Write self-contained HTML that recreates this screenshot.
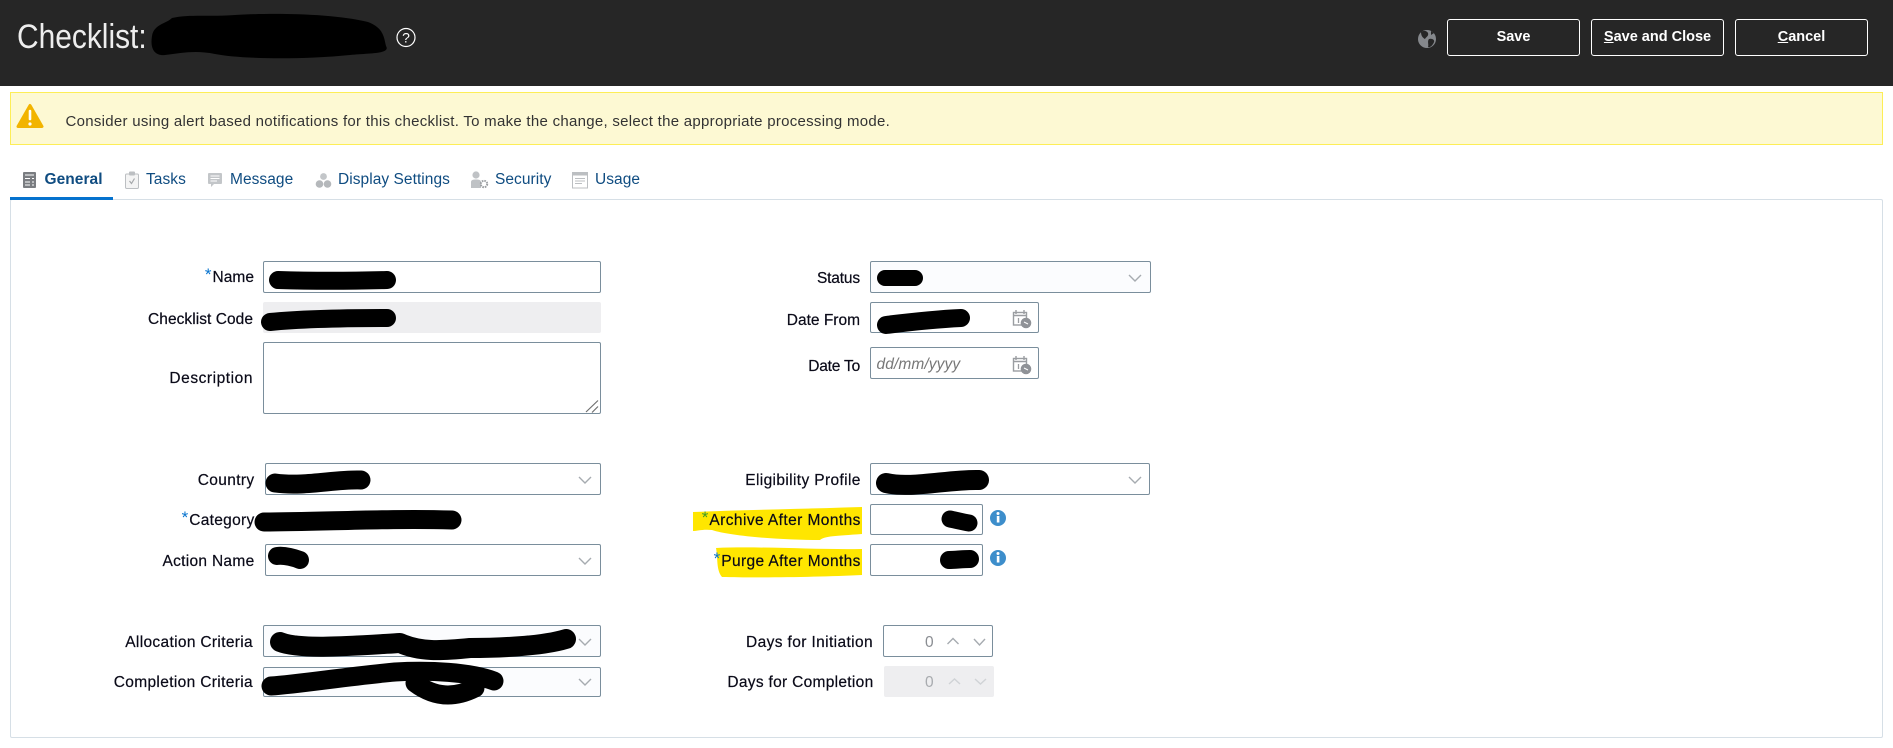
<!DOCTYPE html>
<html lang="en">
<head>
<meta charset="utf-8">
<title>Checklist</title>
<style>
html,body{margin:0;padding:0;background:#fff;}
body{position:relative;width:1893px;height:748px;overflow:hidden;font-family:"Liberation Sans",Arial,sans-serif;color:#111;}
.a{position:absolute;box-sizing:border-box;}
.hdr{left:0;top:0;width:1893px;height:86px;background:#262626;}
.title{left:17px;top:17px;font-size:34px;line-height:40px;color:#eee;transform:scaleX(.88);transform-origin:left top;white-space:nowrap;}
.btn{top:19px;height:37px;width:133px;border:1px solid #fff;border-radius:3px;color:#fff;font-weight:bold;font-size:14.5px;line-height:35px;text-align:center;white-space:nowrap;}
.warn{left:10px;top:92px;width:1873px;height:53px;background:#fdf9d3;border:1px solid #fdee56;}
.wtext{left:65.5px;top:111.5px;font-size:15px;line-height:20px;color:#333;white-space:nowrap;letter-spacing:.28px;}
.tab{top:170px;font-size:15.5px;line-height:20px;color:#0f4c81;white-space:nowrap;letter-spacing:.05px;}
.panel{left:10px;top:199px;width:1873px;height:539px;border:1px solid #d6dfe6;border-radius:2px;}
.ul{left:10px;top:197px;width:103px;height:3px;background:#0572ce;}
.f{border:1px solid #7a8e9c;border-radius:2px;background:#fff;}
.s{background:#fbfcfe;}
.d{background:#eeeef0;border-radius:2px;}
.l{font-size:15.5px;line-height:20px;color:#0a0a18;white-space:nowrap;text-align:right;letter-spacing:.3px;-webkit-text-stroke:.2px #0a0a18;}
.l i{font-style:normal;color:#0572ce;-webkit-text-stroke:0;font-size:17px;line-height:10px;position:relative;top:-2px;margin-right:1px;letter-spacing:0;}
.ph{left:876.5px;top:355px;font-size:15.5px;line-height:20px;font-style:italic;color:#777;white-space:nowrap;letter-spacing:.1px;}
.num{font-size:15.5px;line-height:20px;color:#8a8d92;}
svg.o{position:absolute;left:0;top:0;width:1893px;height:748px;pointer-events:none;}
</style>
</head>
<body>
<div class="a hdr"></div>
<div class="a title">Checklist:</div>
<div class="a btn" style="left:1447px">Save</div>
<div class="a btn" style="left:1591px"><u>S</u>ave and Close</div>
<div class="a btn" style="left:1735px"><u>C</u>ancel</div>

<div class="a warn"></div>
<div class="a wtext">Consider using alert based notifications for this checklist. To make the change, select the appropriate processing mode.</div>

<div class="a panel"></div>
<div class="a ul"></div>
<div class="a tab" style="left:44.5px;font-weight:bold">General</div>
<div class="a tab" style="left:146px">Tasks</div>
<div class="a tab" style="left:230px">Message</div>
<div class="a tab" style="left:338px">Display Settings</div>
<div class="a tab" style="left:495px">Security</div>
<div class="a tab" style="left:595px">Usage</div>

<!-- yellow highlight under labels -->
<svg class="o" viewBox="0 0 1893 748">
<path fill="#ffe600" d="M693 512 C740 510 800 509 862 507 L862 534 C835 536 825 536 820 540 C780 540 730 536 712 530 C703 529 697 531 693 531 Z"/>
<path fill="#ffe600" d="M716 548 C760 546 820 550 862 549 L862 575 C820 577 760 578 722 577 C716 570 718 558 716 548 Z"/>
</svg>

<!-- left column -->
<div class="a l" style="right:1639px;top:268px;letter-spacing:.05px"><i>*</i>Name</div>
<div class="a f" style="left:263px;top:261px;width:338px;height:32px"></div>
<div class="a l" style="right:1640px;top:309.5px;letter-spacing:.05px">Checklist Code</div>
<div class="a d" style="left:263px;top:302px;width:338px;height:31px"></div>
<div class="a l" style="right:1640px;top:368.5px;letter-spacing:.55px">Description</div>
<div class="a f" style="left:263px;top:342px;width:338px;height:72px"></div>

<div class="a l" style="right:1638.5px;top:471px;letter-spacing:.35px">Country</div>
<div class="a f" style="left:265px;top:463px;width:336px;height:32px"></div>
<div class="a l" style="right:1638.5px;top:510.500px;letter-spacing:.3px"><i>*</i>Category</div>
<div class="a l" style="right:1638.5px;top:552px">Action Name</div>
<div class="a f" style="left:265px;top:544px;width:336px;height:32px"></div>
<div class="a l" style="right:1640px;top:632.5px;letter-spacing:.33px">Allocation Criteria</div>
<div class="a f s" style="left:263px;top:625px;width:338px;height:32px"></div>
<div class="a l" style="right:1640px;top:673px;letter-spacing:.35px">Completion Criteria</div>
<div class="a f s" style="left:263px;top:667px;width:338px;height:30px"></div>

<!-- right column -->
<div class="a l" style="right:1033px;top:268.5px;letter-spacing:-.15px">Status</div>
<div class="a f s" style="left:870px;top:261px;width:281px;height:32px"></div>
<div class="a l" style="right:1033px;top:311px;letter-spacing:0">Date From</div>
<div class="a f" style="left:870px;top:302px;width:169px;height:31px"></div>
<div class="a l" style="right:1033px;top:357px;letter-spacing:-.2px">Date To</div>
<div class="a f" style="left:870px;top:347px;width:169px;height:32px"></div>
<div class="a ph">dd/mm/yyyy</div>

<div class="a l" style="right:1032.2px;top:471px;letter-spacing:.37px">Eligibility Profile</div>
<div class="a f" style="left:870px;top:463px;width:279.5px;height:32px"></div>
<div class="a l" style="right:1032.2px;top:510.5px;letter-spacing:.42px"><i style="color:#3f9a2a">*</i>Archive After Months</div>
<div class="a f" style="left:870px;top:504px;width:113px;height:31px"></div>
<div class="a l" style="right:1032.2px;top:551.5px;letter-spacing:.38px"><i>*</i>Purge After Months</div>
<div class="a f" style="left:870px;top:544px;width:113px;height:32px"></div>

<div class="a l" style="right:1020px;top:632.5px;letter-spacing:.38px">Days for Initiation</div>
<div class="a f" style="left:883px;top:625px;width:110px;height:32px"></div>
<div class="a num" style="left:925px;top:633px">0</div>
<div class="a l" style="right:1019.5px;top:672.5px;letter-spacing:.3px">Days for Completion</div>
<div class="a d" style="left:884px;top:666px;width:110px;height:31px"></div>
<div class="a num" style="left:925px;top:673px;color:#a8abaf">0</div>

<!-- icons and redaction marks -->
<svg class="o" viewBox="0 0 1893 748">
<!-- help -->
<circle cx="406" cy="37.500" r="9" fill="none" stroke="#fff" stroke-width="1.200"/>
<text x="406" y="42.500" font-family="Liberation Sans,sans-serif" font-size="14" fill="#fff" text-anchor="middle">?</text>
<!-- globe -->
<circle cx="1427" cy="39" r="9" fill="#85888c"/>
<path fill="#262626" d="M1421 32 C1424 30 1427 31 1428 33 C1429 36 1426 37 1425 39 C1423 38 1421 36 1421 32 Z M1429 39 C1432 38 1435 40 1434 42 C1433 45 1430 48 1428 47 C1429 45 1427 41 1429 39 Z M1431 31 L1434 33 L1431 35 Z"/>
<!-- warning -->
<path fill="#f2b400" stroke="#f2b400" stroke-width="3" stroke-linejoin="round" d="M30 105.500 L42 126.500 L18 126.500 Z"/>
<path stroke="#fff" stroke-width="2.600" stroke-linecap="round" d="M30 111 L30 119"/>
<circle cx="30" cy="124" r="1.600" fill="#fff"/>

<!-- General tab icon -->
<rect x="23" y="172" width="13" height="16" rx="1" fill="#7a7d81"/>
<path stroke="#fff" stroke-width="1" fill="none" d="M25 175 H34 M25 178.500 H30 M32 178.500 H34 M25 182 H30 M32 182 H34 M25 185 H30 M32 185 H34"/>
<!-- Tasks icon -->
<rect x="125.500" y="174" width="13" height="14.500" rx="1.200" fill="#f4f4f4" stroke="#bcbfc2"/>
<rect x="129" y="171.500" width="6" height="4" rx="1" fill="#bcbfc2"/>
<path fill="none" stroke="#a4a7aa" stroke-width="1.200" d="M129.500 181 L131.500 183.500 L134.500 178.500"/>
<!-- Message icon -->
<path fill="#c3c6c9" d="M209 173 H221 A1 1 0 0 1 222 174 V183 A1 1 0 0 1 221 184 H214 L211 187 V184 H209 A1 1 0 0 1 208 183 V174 A1 1 0 0 1 209 173 Z"/>
<path stroke="#fff" stroke-width="1" d="M210.500 176 H219.500 M210.500 178.500 H219.500 M210.500 181 H217"/>
<!-- Display icon -->
<circle cx="323.500" cy="176.500" r="3.400" fill="#c3c6c9"/><circle cx="319.500" cy="184" r="3.800" fill="#b5b8bb"/><circle cx="327.500" cy="184" r="3.800" fill="#b5b8bb"/>
<!-- Security icon -->
<circle cx="476" cy="175" r="3.600" fill="#bfc2c5"/>
<path fill="#bfc2c5" d="M471 188 V182 C471 180 473 179.500 476 179.500 C479 179.500 481 180 481 182 V188 Z"/>
<circle cx="484" cy="184" r="3.200" fill="none" stroke="#9b9ea1" stroke-width="2" stroke-dasharray="1.600 .9"/>
<!-- Usage icon -->
<rect x="572.500" y="172.500" width="15" height="15.500" fill="#fff" stroke="#bcbfc2"/>
<rect x="572.500" y="172.500" width="15" height="3" fill="#bcbfc2"/>
<path stroke="#bcbfc2" d="M575 178.500 H585 M575 181 H585 M575 183.500 H582"/>

<!-- textarea resizer -->
<path stroke="#6f6f6f" stroke-width="1.200" d="M586 412 L598 400.500 M592 412.500 L598 406.500"/>

<!-- chevrons -->
<g fill="none" stroke="#a6abb0" stroke-width="1.400">
<path d="M1129 275 L1135 281 L1141 275"/>
<path d="M579 477 L585 483 L591 477"/>
<path d="M579 558 L585 564 L591 558"/>
<path d="M579 639 L585 645 L591 639"/>
<path d="M579 679 L585 685 L591 679"/>
<path d="M1129 477 L1135 483 L1141 477"/>
<path d="M974 639 L979.500 645 L985 639"/>
<path d="M947.500 644 L953 638.500 L958.500 644"/>
</g>
<g fill="none" stroke="#d0d3d6" stroke-width="1.400">
<path d="M949 684 L954.500 679 L960 684"/>
<path d="M975 679 L980.500 684 L986 679"/>
</g>

<!-- calendars -->
<g>
<rect x="1013.500" y="312.500" width="13" height="12.500" fill="#fff" stroke="#9a9da1" stroke-width="1.400"/>
<path stroke="#9a9da1" stroke-width="1.400" d="M1016 310 V314 M1024 310 V314 M1013 315.500 H1027"/>
<path stroke="#9a9da1" stroke-width="1.300" d="M1018.500 318 V323"/>
<circle cx="1026" cy="323" r="5.300" fill="#8f9297"/>
<path stroke="#fff" stroke-width="1" d="M1024 322 L1028 324"/>
</g>
<g>
<rect x="1013.500" y="358.500" width="13" height="12.500" fill="#fff" stroke="#9a9da1" stroke-width="1.400"/>
<path stroke="#9a9da1" stroke-width="1.400" d="M1016 356 V360 M1024 356 V360 M1013 361.500 H1027"/>
<path stroke="#9a9da1" stroke-width="1.300" d="M1018.500 364 V369"/>
<circle cx="1026" cy="369" r="5.300" fill="#8f9297"/>
<path stroke="#fff" stroke-width="1" d="M1024 368 L1028 370"/>
</g>

<!-- info -->
<circle cx="998" cy="518" r="8" fill="#3d8ecb"/>
<circle cx="998" cy="558" r="8" fill="#3d8ecb"/>
<g fill="#fff">
<rect x="996.800" y="516" width="2.600" height="6.500"/><circle cx="998" cy="513.500" r="1.500"/>
<rect x="996.800" y="556" width="2.600" height="6.500"/><circle cx="998" cy="553.500" r="1.500"/>
</g>

<!-- redaction marks -->
<path fill="#000" d="M152 36 C154 24 166 24 172 18 C190 14 210 17 235 15 C270 13 330 13 368 22 C384 28 384 38 386 46 C391 54 370 53 350 55 C300 60 240 59 215 54 C195 50 182 53 165 55 C154 56 150 48 152 36 Z"/>
<g fill="none" stroke="#000" stroke-linecap="round" stroke-linejoin="round">
<path stroke-width="18" d="M278 280 C310 281 350 281 387 280"/>
<path stroke-width="18" d="M270 322 C300 319 350 318 387 318"/>
<path stroke-width="16" d="M885 278 H915"/>
<path stroke-width="18" d="M886 325 C910 322 940 319 961 318"/>
<path stroke-width="19" d="M275 483 C305 487 335 479 361 480"/>
<path stroke-width="19" d="M264 522 C320 522 390 518 452 520"/>
<path stroke-width="18" d="M277 556 C285 555 295 558 300 560"/>
<path stroke-width="20" d="M280 642 C300 650 350 646 400 643 C420 652 440 651 470 648 C490 648 540 647 566 639"/>
<path stroke-width="19" d="M271 686 C300 684 350 676 395 672 C430 670 470 672 494 681"/>
<path stroke-width="19" d="M415 683 C435 698 455 698 475 688"/>
<path stroke-width="20" d="M886 483 C910 489 950 479 979 480"/>
<path stroke-width="17" d="M950 519 C955 520 963 522 969 523"/>
<path stroke-width="18" d="M949 560 C955 560 963 559 970 559"/>
</g>
</svg>
</body>
</html>
